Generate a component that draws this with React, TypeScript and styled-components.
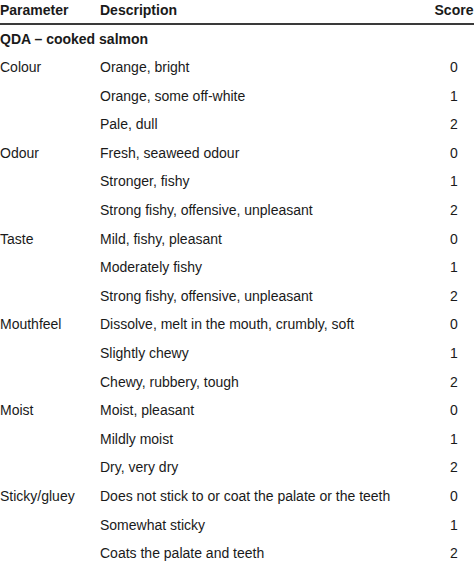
import React from 'react';
import styled, { createGlobalStyle } from 'styled-components';

const GlobalStyle = createGlobalStyle`
  html, body {
    margin: 0;
    padding: 0;
    background: #ffffff;
  }

  body {
    font-family: "Liberation Sans", Arial, sans-serif;
    font-size: 14px;
    color: #1a1a1a;
    overflow: hidden;
  }
`;

const Table = styled.div`
  width: 474px;
  display: grid;
  grid-template-columns: 100px 334px 40px;
`;

const HeaderCell = styled.div<{ $center?: boolean }>`
  height: 23px;
  line-height: 20px;
  font-weight: bold;
  white-space: nowrap;
  border-bottom: 2px solid #3a3a3a;
  text-align: ${({ $center }) => ($center ? 'center' : 'left')};
`;

const GroupTitle = styled.div`
  grid-column: 1 / -1;
  height: 28px;
  line-height: 28px;
  font-weight: bold;
  white-space: nowrap;
`;

const Cell = styled.div<{ $center?: boolean }>`
  height: 28.6px;
  line-height: 28.6px;
  white-space: nowrap;
  text-align: ${({ $center }) => ($center ? 'center' : 'left')};
`;

interface Criterion {
  parameter: string;
  levels: string[];
}

const criteria: Criterion[] = [
  { parameter: 'Colour', levels: ['Orange, bright', 'Orange, some off-white', 'Pale, dull'] },
  { parameter: 'Odour', levels: ['Fresh, seaweed odour', 'Stronger, fishy', 'Strong fishy, offensive, unpleasant'] },
  { parameter: 'Taste', levels: ['Mild, fishy, pleasant', 'Moderately fishy', 'Strong fishy, offensive, unpleasant'] },
  { parameter: 'Mouthfeel', levels: ['Dissolve, melt in the mouth, crumbly, soft', 'Slightly chewy', 'Chewy, rubbery, tough'] },
  { parameter: 'Moist', levels: ['Moist, pleasant', 'Mildly moist', 'Dry, very dry'] },
  {
    parameter: 'Sticky/gluey',
    levels: ['Does not stick to or coat the palate or the teeth', 'Somewhat sticky', 'Coats the palate and teeth'],
  },
];

export default function App() {
  return (
    <>
      <GlobalStyle />
      <Table>
        <HeaderCell>Parameter</HeaderCell>
        <HeaderCell>Description</HeaderCell>
        <HeaderCell $center>Score</HeaderCell>
        <GroupTitle>QDA – cooked salmon</GroupTitle>
        {criteria.map((c) =>
          c.levels.map((level, i) => (
            <React.Fragment key={c.parameter + i}>
              <Cell>{i === 0 ? c.parameter : ''}</Cell>
              <Cell>{level}</Cell>
              <Cell $center>{i}</Cell>
            </React.Fragment>
          ))
        )}
      </Table>
    </>
  );
}
